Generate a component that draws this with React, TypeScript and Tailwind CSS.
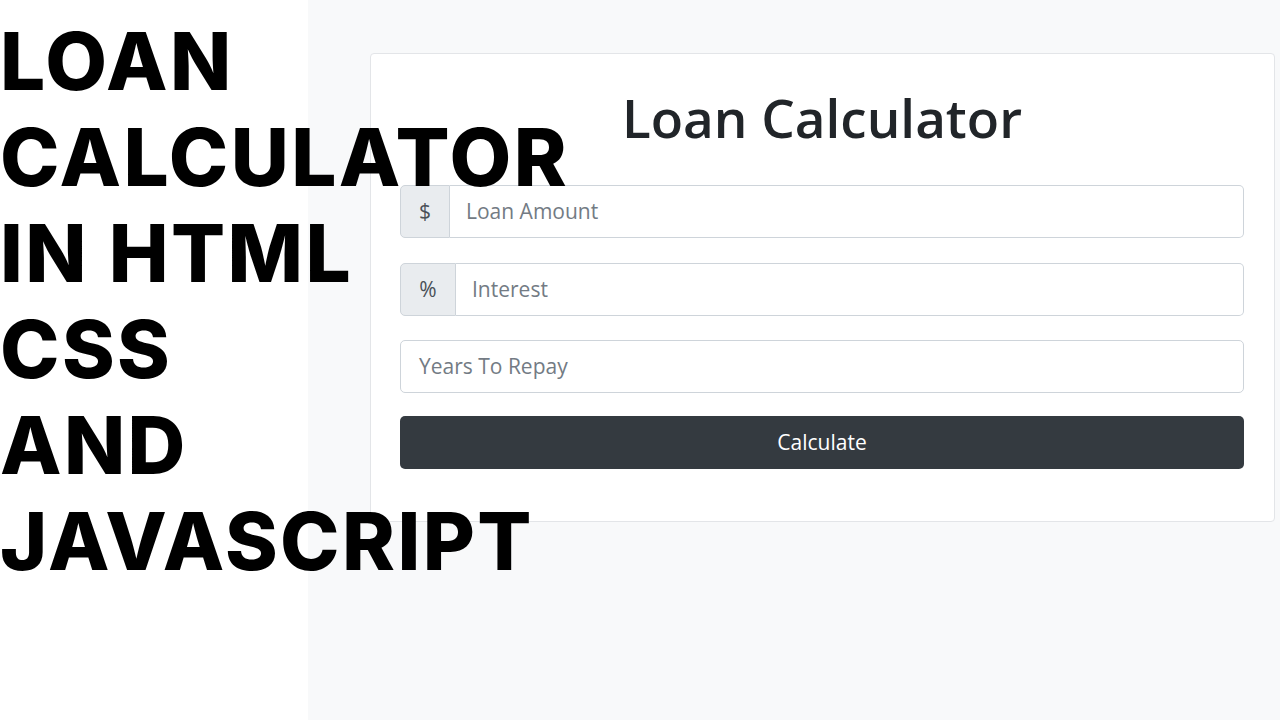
import React from "react";

export default function App() {
  const ui = { fontFamily: '"Open Sans", "Noto Sans", sans-serif' };
  const big = { fontFamily: 'Inter, Lato, sans-serif' };
  return (
    <div className="flex w-[1280px] h-[720px] overflow-hidden bg-[#f8f9fa]" style={ui}>
      <div className="relative z-10 w-[308px] shrink-0 bg-white pt-[13px]">
        <div
          className="whitespace-nowrap text-[80px] leading-[96px] font-extrabold tracking-[0.03em] text-black"
          style={big}
        >
          <div>LOAN</div>
          <div>CALCULATOR</div>
          <div>IN HTML</div>
          <div>CSS</div>
          <div>AND</div>
          <div>JAVASCRIPT</div>
        </div>
      </div>
      <div className="flex-1 pl-[62px] pr-[5px] pt-[53px]">
        <div className="bg-white border border-[#e3e5e8] rounded-[4px] pt-[31px] pb-[52px] pl-[29px] pr-[30px]">
          <h1 className="text-center text-[53px] leading-[65px] font-semibold text-[#212529] mb-[35px]">Loan Calculator</h1>
          <div className="flex h-[53px] mb-[25px] text-[21px]">
            <div className="w-[50px] flex items-center justify-center bg-[#e9ecef] border border-[#ced4da] rounded-l-[5px] text-[#495057]">$</div>
            <div className="flex-1 flex items-center pl-[16px] border border-l-0 border-[#ced4da] rounded-r-[5px] bg-white text-[#737b84]">Loan Amount</div>
          </div>
          <div className="flex h-[53px] mb-[24px] text-[21px]">
            <div className="w-[56px] flex items-center justify-center bg-[#e9ecef] border border-[#ced4da] rounded-l-[5px] text-[#495057]">%</div>
            <div className="flex-1 flex items-center pl-[16px] border border-l-0 border-[#ced4da] rounded-r-[5px] bg-white text-[#737b84]">Interest</div>
          </div>
          <div className="flex items-center h-[53px] mb-[23px] pl-[18px] text-[21px] border border-[#ced4da] rounded-[5px] bg-white text-[#737b84]">Years To Repay</div>
          <div className="flex items-center justify-center h-[53px] rounded-[5px] bg-[#343a40] text-white text-[21px]">Calculate</div>
        </div>
      </div>
    </div>
  );
}
